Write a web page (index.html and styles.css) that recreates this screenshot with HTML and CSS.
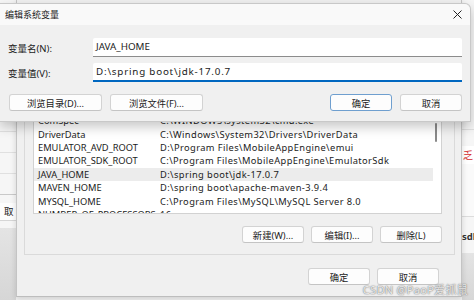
FILE: index.html
```html
<!DOCTYPE html>
<html>

<head>
  <title>编辑系统变量</title>
  <meta name="viewport" content="width=device-width, initial-scale=1">

  <link rel="stylesheet" href="styles.css">
</head>

<body>
  <div id="desktop">

    <!-- janela de fundo -->
    <div class="back-window">
      <div class="back-left">
        <div class="back-row"></div>
        <div class="back-row"></div>
        <div class="back-row"></div>
        <div class="back-row dark"></div>
        <div class="back-btn">取</div>
        <div class="back-shade"></div>
      </div>
      <div class="back-right">
        <div class="back-row"></div>
        <div class="back-red">乏</div>
        <div class="back-gap"></div>
        <div class="back-sdl">sdl</div>
        <div class="back-shade"></div>
      </div>
    </div>

    <!-- variáveis de ambiente -->
    <div class="env-dialog">
      <div class="group">
        <div class="var-list">
          <div class="var-row"></div>
          <div class="var-row"></div>
          <div class="var-row"></div>
          <div class="var-row"><span class="var-name">ComSpec</span><span class="path">C:\WINDOWS\system32\cmd.exe</span></div>
          <div class="var-row"><span class="var-name">DriverData</span><span class="path">C:\Windows\System32\Drivers\DriverData</span></div>
          <div class="var-row"><span class="var-name">EMULATOR_AVD_ROOT</span><span class="path">D:\Program Files\MobileAppEngine\emui</span></div>
          <div class="var-row"><span class="var-name">EMULATOR_SDK_ROOT</span><span class="path">C:\Program Files\MobileAppEngine\EmulatorSdk</span></div>
          <div class="var-row selected"><span class="var-name">JAVA_HOME</span><span class="path">D:\spring boot\jdk-17.0.7</span></div>
          <div class="var-row"><span class="var-name">MAVEN_HOME</span><span class="path">D:\spring boot\apache-maven-3.9.4</span></div>
          <div class="var-row"><span class="var-name">MYSQL_HOME</span><span class="path">C:\Program Files\MySQL\MySQL Server 8.0</span></div>
          <div class="var-row"><span class="var-name">NUMBER_OF_PROCESSORS</span><span class="path">16</span></div>
          <div class="scroll-thumb"></div>
        </div>
        <div class="group-buttons">
          <button class="win-btn">新建(W)...</button>
          <button class="win-btn">编辑(I)...</button>
          <button class="win-btn">删除(L)</button>
        </div>
      </div>
      <div class="dialog-buttons">
        <button class="win-btn">确定</button>
        <button class="win-btn">取消</button>
      </div>
    </div>

    <!-- editar variável do sistema -->
    <div class="edit-dialog">
      <div class="title-bar">
        <span>编辑系统变量</span>
        <svg class="close-icon" width="9" height="9" viewBox="0 0 9 9">
          <path d="M0.5 0.5 L8.5 8.5 M8.5 0.5 L0.5 8.5" stroke="#222" stroke-width="1" fill="none" />
        </svg>
      </div>
      <div class="edit-body">
        <div class="field">
          <label>变量名(N):</label>
          <div class="text-input">JAVA_HOME</div>
        </div>
        <div class="field">
          <label>变量值(V):</label>
          <div class="text-input focused"><span class="path-input">D:\spring boot\jdk-17.0.7</span></div>
        </div>
        <div class="edit-buttons">
          <button class="win-btn wide">浏览目录(D)...</button>
          <button class="win-btn wide">浏览文件(F)...</button>
          <div class="spacer"></div>
          <button class="win-btn default">确定</button>
          <button class="win-btn">取消</button>
        </div>
      </div>
    </div>

    <div class="watermark">CSDN @PaoP爱抓鼠</div>
  </div>
</body>

</html>
```

FILE: styles.css
```css
body {
  margin: 0;
  padding: 0;
  overflow: hidden;
  font-family: "Noto Sans", "Noto Sans CJK SC", sans-serif;
  font-size: 9px;
  color: #1b1b1b;
}

#desktop {
  position: relative;
  width: 474px;
  height: 300px;
  overflow: hidden;
  background: #f2f2f2;
}

/* JANELA DE FUNDO */
.back-window {
  position: absolute;
  inset: 0;
  display: flex;
  justify-content: space-between;
}

.back-left,
.back-right {
  display: flex;
  flex-direction: column;
  width: 16px;
  padding-top: 111px;
  background: #f6f6f6;
}

.back-right {
  width: 12px;
  padding-top: 109px;
}

.back-row {
  height: 20px;
  border-bottom: 1px solid #e0e0e0;
}

.back-row.dark {
  border-bottom-color: #c9c9c9;
}

.back-btn {
  height: 17px;
  margin-top: 8px;
  padding-left: 4px;
  background: #fdfdfd;
  border-bottom: 1px solid #d6d6d6;
  line-height: 17px;
  font-size: 9.5px;
}

.back-shade {
  flex-grow: 1;
  margin-top: 7px;
  background: linear-gradient(#e4e4e4, #d6d6d6);
}

.back-red {
  height: 18px;
  margin-top: 16px;
  color: #d42a2a;
  font-size: 10px;
  line-height: 18px;
  padding-left: 1px;
  background: #fff;
}

.back-gap {
  height: 52px;
  border-bottom: 1px solid #dcdcdc;
  background: #fafafa;
}

.back-sdl {
  height: 18px;
  margin-top: 11px;
  line-height: 18px;
  font-size: 9.5px;
  font-weight: bold;
  color: #333;
}

/* DIALOGO VARIAVEIS */
.env-dialog {
  position: absolute;
  left: 16px;
  top: 0;
  width: 446px;
  height: 297px;
  box-sizing: border-box;
  padding: 58px 6px 12px 8px;
  background: #f0f0f0;
  border-left: 1px solid #c4c4c4;
  border-right: 1px solid #c4c4c4;
  border-bottom: 1px solid #bdbdbd;
  box-shadow: 0 2px 6px rgba(0, 0, 0, 0.15);
}

.group {
  border: 1px solid #dadada;
  padding: 15px 12px 11px 8px;
  margin-left: -1px;
}

.var-list {
  position: relative;
  height: 140px;
  box-sizing: border-box;
  overflow: hidden;
  background: #fff;
  border: 1px solid #d2d2d2;
  border-top: none;
}

.var-row {
  display: flex;
  height: 13.4px;
  line-height: 13.4px;
  padding-left: 4px;
  white-space: nowrap;
  margin-right: 8px;
  font-size: 9.3px;
}

.var-row.selected {
  background: #ececec;
}

.var-name {
  width: 122px;
  flex-shrink: 0;
}

.path {
  letter-spacing: 0.4px;
}

.scroll-thumb {
  position: absolute;
  right: 4px;
  top: 49px;
  width: 2px;
  height: 19px;
  border-radius: 1px;
  background: #8a8a8a;
}

.group-buttons {
  display: flex;
  justify-content: flex-end;
  gap: 7px;
  margin-top: 12px;
}

.dialog-buttons {
  display: flex;
  justify-content: flex-end;
  gap: 7px;
  margin-top: 13px;
  margin-right: 16px;
}

/* BOTOES */
.win-btn {
  width: 62px;
  height: 17px;
  padding: 0;
  background: #fdfdfd;
  border: 1px solid #d3d3d3;
  border-bottom-color: #c4c4c4;
  border-radius: 3px;
  font-family: inherit;
  font-size: 9.3px;
  color: #1b1b1b;
}

.win-btn.wide {
  width: 93px;
}

.win-btn.default {
  border-color: #6f9fcf;
}

/* DIALOGO EDITAR */
.edit-dialog {
  position: absolute;
  left: 0;
  top: 3px;
  width: 471px;
  height: 119px;
  box-sizing: border-box;
  background: #f0f0f0;
  border: 1px solid #c8c8c8;
  border-left: none;
  border-radius: 0 6px 0 0;
  box-shadow: 0 5px 12px rgba(0, 0, 0, 0.22);
}

.title-bar {
  display: flex;
  align-items: center;
  justify-content: space-between;
  height: 21px;
  padding: 0 8px 0 5px;
  background: #f9f9f9;
  border-radius: 0 6px 0 0;
  font-size: 9px;
}

.close-icon {
  display: block;
}

.edit-body {
  padding: 13px 8px 0 8px;
}

.field {
  display: flex;
  align-items: center;
  margin-bottom: 6px;
}

.field label {
  width: 85px;
  flex-shrink: 0;
  font-size: 9.5px;
}

.text-input {
  flex-grow: 1;
  height: 19px;
  box-sizing: border-box;
  padding-left: 3px;
  line-height: 18px;
  background: #fff;
  border-bottom: 1px solid #8c8c8c;
  border-radius: 2px 2px 0 0;
  font-size: 9.8px;
}

.text-input.focused {
  border-bottom: 2px solid #0067c0;
}

.path-input {
  letter-spacing: 0.8px;
}

.edit-buttons {
  display: flex;
  gap: 8px;
  margin-top: 12px;
  padding-left: 1px;
}

.spacer {
  flex-grow: 1;
}

/* MARCA D'AGUA */
.watermark {
  position: absolute;
  right: 6px;
  bottom: 3px;
  font-size: 11px;
  color: rgba(255, 255, 255, 0.85);
  text-shadow: 0 0 1px #666, 0 0 2px #999;
  letter-spacing: 0.3px;
}
```
